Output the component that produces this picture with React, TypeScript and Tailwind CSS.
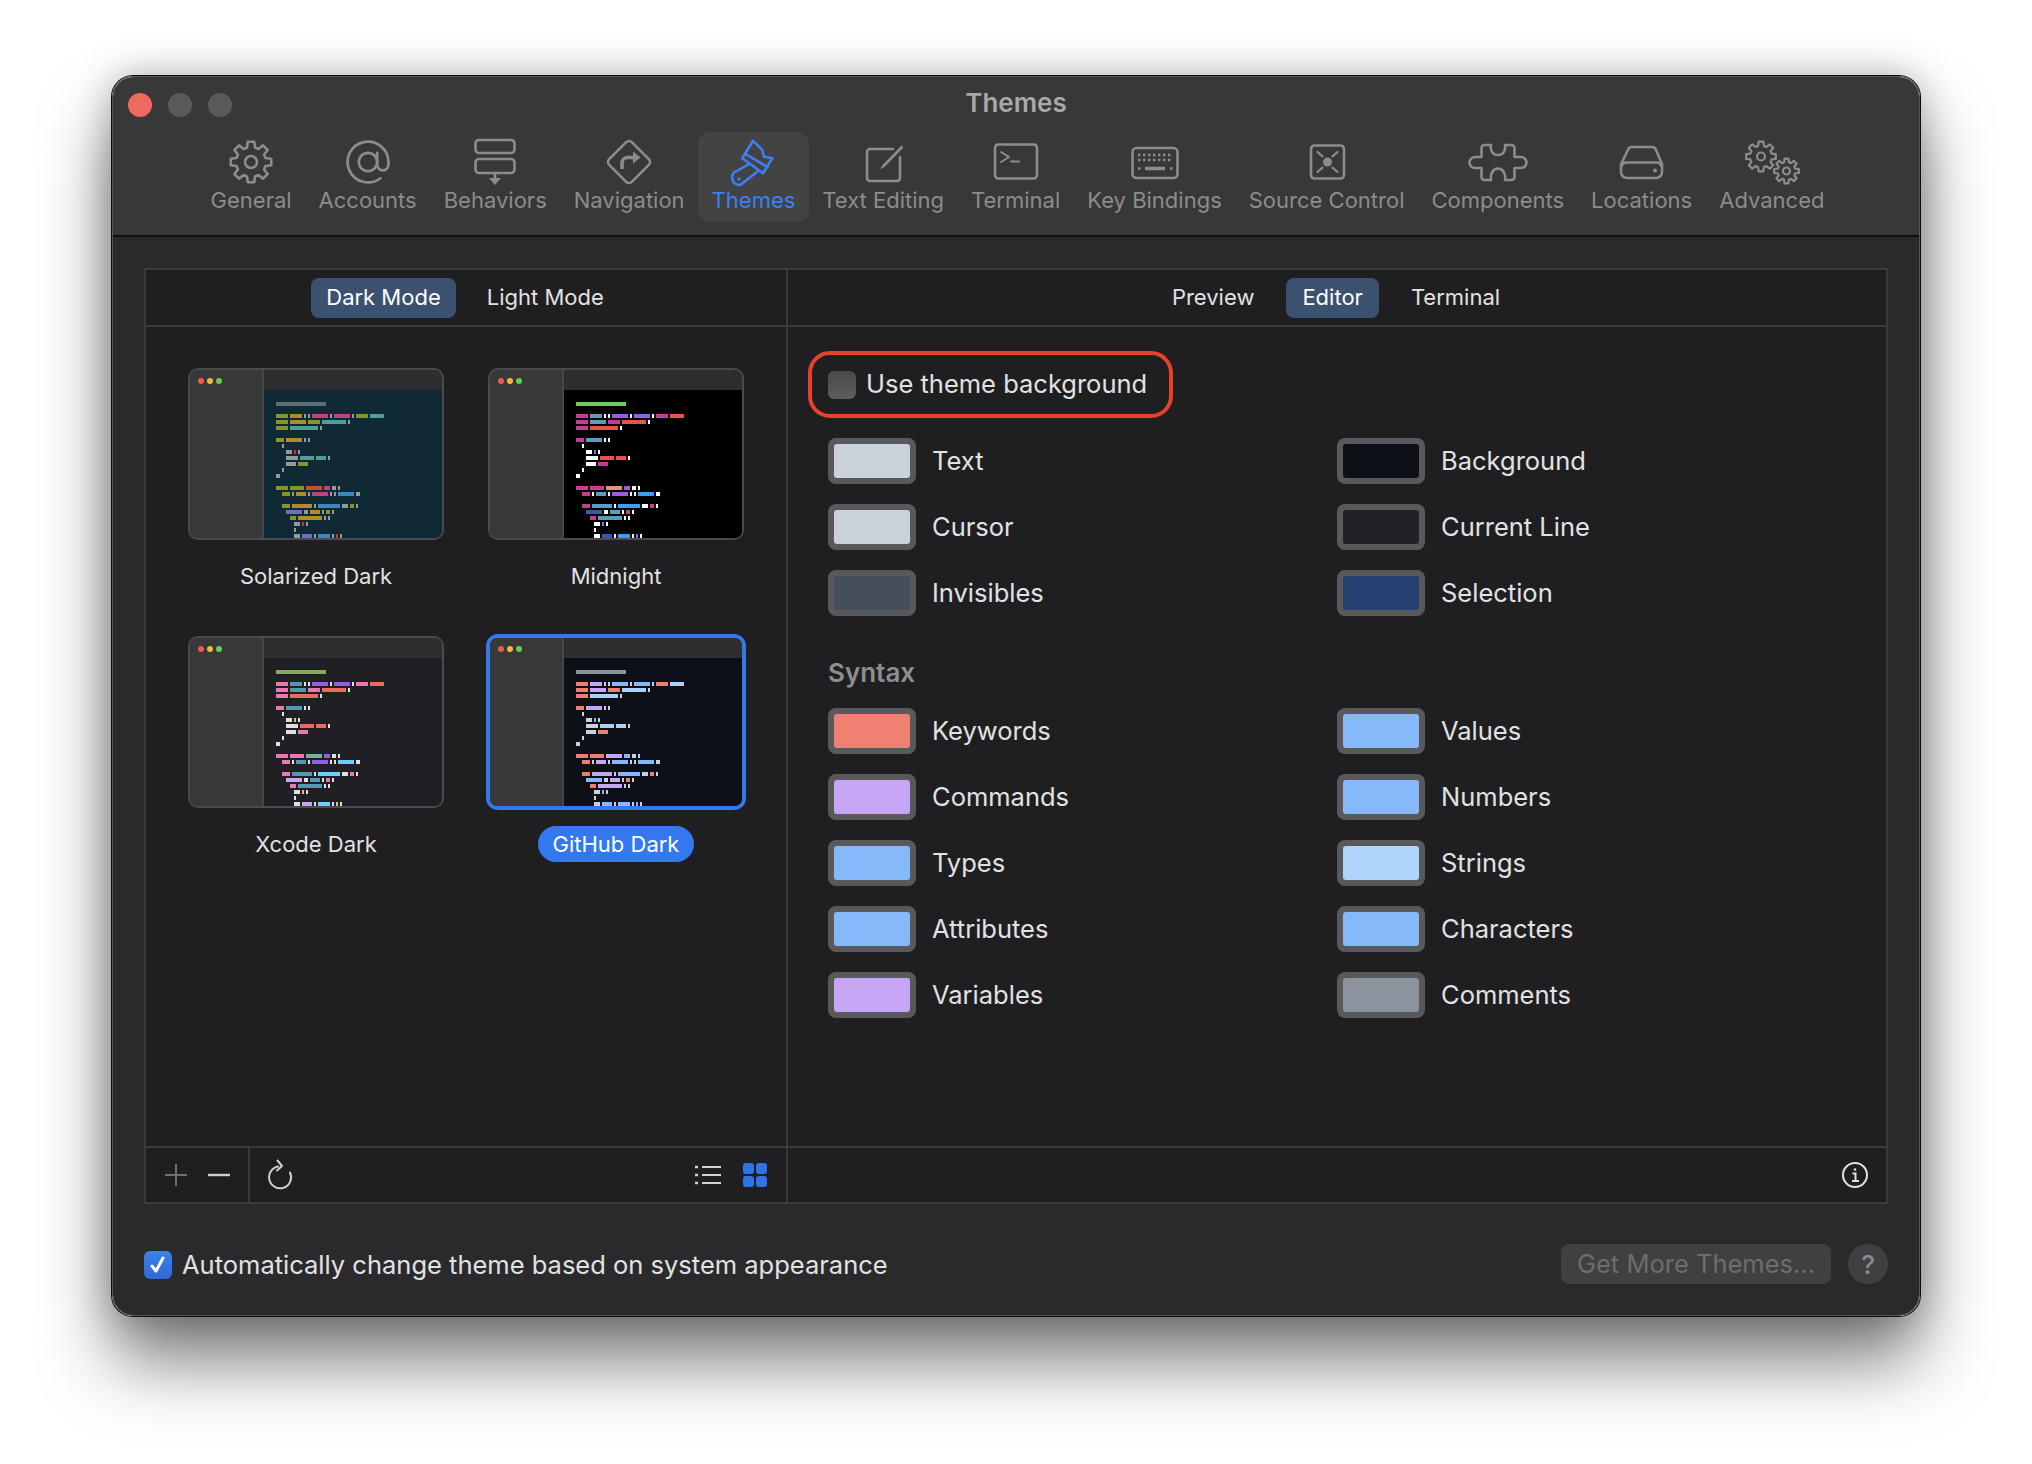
import React from "react";

type Seg = [number, string];
const rows: { i: number; s: Seg[] }[] = [
  { i: 0, s: [[50, "K"]] },
  { i: 0, s: [] },
  { i: 0, s: [[12, "A"], [12, "B"], [2, "P"], [2, "P"], [16, "C"], [2, "P"], [16, "C"], [2, "P"], [12, "A"], [14, "D"]] },
  { i: 0, s: [[12, "A"], [16, "B"], [12, "A"], [24, "D"], [2, "P"]] },
  { i: 0, s: [[12, "A"], [28, "D"], [2, "P"]] },
  { i: 0, s: [] },
  { i: 0, s: [[8, "A"], [16, "B"], [2, "P"], [2, "P"]] },
  { i: 6, s: [[2, "P"]] },
  { i: 10, s: [[6, "P"], [2, "E"], [2, "P"]] },
  { i: 10, s: [[12, "P"], [14, "D"], [10, "D"], [2, "P"]] },
  { i: 10, s: [[10, "P"], [10, "A"]] },
  { i: 6, s: [[2, "P"]] },
  { i: 0, s: [[4, "P"]] },
  { i: 0, s: [] },
  { i: 0, s: [[12, "A"], [14, "A"], [16, "G"], [6, "C"], [4, "P"], [2, "P"]] },
  { i: 6, s: [[8, "A"], [2, "P"], [10, "B"], [2, "P"], [16, "C"], [2, "P"], [2, "P"], [16, "H"], [4, "P"]] },
  { i: 0, s: [] },
  { i: 6, s: [[8, "A"], [20, "B"], [2, "P"], [22, "H"], [6, "P"], [4, "A"], [2, "P"]] },
  { i: 10, s: [[16, "I"], [4, "P"], [10, "B"], [2, "P"], [4, "A"], [2, "P"]] },
  { i: 14, s: [[6, "A"], [24, "B"], [2, "P"], [2, "P"]] },
  { i: 18, s: [[6, "P"], [2, "E"], [2, "P"]] },
  { i: 18, s: [[2, "P"]] },
  { i: 18, s: [[6, "P"], [10, "I"], [2, "P"], [12, "H"], [2, "P"], [2, "E"], [2, "P"]] },
];

const themes: { name: string; bg: string; selected?: boolean; p: Record<string, string> }[] = [
  {
    name: "Solarized Dark",
    bg: "bg-[#102a35]",
    p: { A: "#87942a", B: "#b18a2c", P: "#8f9b9c", C: "#c2407f", D: "#4f9e97", E: "#d6352f", G: "#bd5528", H: "#3f86c6", I: "#6d70be", K: "#5b6f74" },
  },
  {
    name: "Midnight",
    bg: "bg-[#000000]",
    p: { A: "#c53d92", B: "#5a9cb9", P: "#ffffff", C: "#9460de", D: "#e8534b", E: "#7470e6", G: "#de996c", H: "#3f9bf0", I: "#3f57a6", K: "#6fca64" },
  },
  {
    name: "Xcode Dark",
    bg: "bg-[#1f1f24]",
    p: { A: "#ec78ae", B: "#5497b5", P: "#dfdfe0", C: "#9360dd", D: "#e96d5e", E: "#d6c56c", G: "#78b09f", H: "#6dcffa", I: "#c9a3f5", K: "#84a95c" },
  },
  {
    name: "GitHub Dark",
    bg: "bg-[#0d1117]",
    selected: true,
    p: { A: "#ef7d73", B: "#c8a6f6", P: "#c9d1d9", C: "#85b9f9", D: "#a8d2fc", E: "#79b8ff", G: "#c8a6f6", H: "#85b9f9", I: "#85b9f9", K: "#8b949e" },
  },
];

function gear(cx: number, cy: number, R: number, r: number, n: number) {
  const pts: string[] = [];
  for (let k = 0; k < n; k++) {
    const a = (k * 2 * Math.PI) / n - Math.PI / 2;
    const t1 = 0.27 * (8 / n);
    const t2 = 0.16 * (8 / n);
    for (const [rad, d] of [[r, -t1], [R, -t2], [R, t2], [r, t1]] as [number, number][]) {
      pts.push(`${(cx + rad * Math.cos(a + d)).toFixed(2)} ${(cy + rad * Math.sin(a + d)).toFixed(2)}`);
    }
  }
  return "M" + pts.join("L") + "Z";
}

const strokeProps = { fill: "none", stroke: "currentColor", strokeLinecap: "round" as const, strokeLinejoin: "round" as const };

const I = ({ w = 48, children }: { w?: number; children: React.ReactNode }) => (
  <svg width={w} height={48} viewBox={`0 0 ${w} 48`} {...strokeProps} strokeWidth={2.6} className="shrink-0">
    {children}
  </svg>
);

const tabs: { label: string; icon: React.ReactNode; active?: boolean }[] = [
  {
    label: "General",
    icon: (
      <I>
        <path d={gear(24, 24, 20.5, 15, 8)} />
        <circle cx={24} cy={24} r={6} />
      </I>
    ),
  },
  {
    label: "Accounts",
    icon: (
      <svg width={48} height={48} viewBox="0 0 24 24" {...strokeProps} strokeWidth={1.35} className="shrink-0">
        <circle cx={12} cy={12} r={4.6} />
        <path d="M16.6 7.4v6a2.8 2.8 0 0 0 5.6 0V12a10.2 10.2 0 1 0-4 8.1" />
      </svg>
    ),
  },
  {
    label: "Behaviors",
    icon: (
      <I>
        <rect x={4.5} y={2} width={39} height={13} rx={3.5} />
        <rect x={4.5} y={21} width={39} height={14} rx={3.5} />
        <path d="M24 35v6" />
        <path d="M18 40h12l-6 7z" fill="currentColor" stroke="none" />
      </I>
    ),
  },
  {
    label: "Navigation",
    icon: (
      <I>
        <rect x={8} y={8} width={32} height={32} rx={4} transform="rotate(45 24 24)" />
        <path d="M17 31v-6a5.5 5.5 0 0 1 5.5-5.5h7" strokeWidth={3.6} strokeLinecap="butt" />
        <path d="M28 13.5l7.5 6-7.5 6z" fill="currentColor" stroke="none" />
      </I>
    ),
  },
  {
    label: "Themes",
    active: true,
    icon: (
      <I>
        <path d="M24 2.700 33.300 12 35 18.700 43.300 20.300 34 35.300 13.300 20.300z" />
        <path d="M16.500 16 38.500 29" />
        <path d="M20 26 8 33a6 6 0 0 0-4.500 8 6.500 6.500 0 0 0 8.500 5.500L29 33" />
        <circle cx={10} cy={41} r={1.7} fill="currentColor" stroke="none" />
      </I>
    ),
  },
  {
    label: "Text Editing",
    icon: (
      <I>
        <path d="M34 11H11a3 3 0 0 0-3 3v26a3 3 0 0 0 3 3h27a3 3 0 0 0 3-3V19" />
        <path d="M42.500 7.500 24 26.500l-3 5 5-3L44.500 9.500z" fill="currentColor" stroke="none" />
      </I>
    ),
  },
  {
    label: "Terminal",
    icon: (
      <I>
        <rect x={3} y={6.500} width={42} height={34} rx={3.5} />
        <path d="M9 14l8 5-8 5" strokeWidth={2} />
        <path d="M19 23.500h8" strokeWidth={2} />
      </I>
    ),
  },
  {
    label: "Key Bindings",
    icon: (
      <I w={60}>
        <rect x={7.500} y={10} width={45} height={30} rx={4} />
        {[17, 22].map((y) => (
          <path key={y} d={`M13 ${y}h35`} strokeWidth={2.6} strokeDasharray="2.4 2.6" strokeLinecap="butt" />
        ))}
        <path d="M20 30.500h20" strokeWidth={3.6} strokeLinecap="butt" />
        <path d="M13 30.500h2.500M45 30.500h2.500" strokeLinecap="butt" />
      </I>
    ),
  },
  {
    label: "Source Control",
    icon: (
      <I>
        <rect x={8} y={7.500} width={33} height={33} rx={3.5} />
        <circle cx={24.5} cy={24} r={4.5} fill="currentColor" stroke="none" />
        <path d="M14.500 14l5 4.300M34.500 14l-5 4.300M14.500 34l5-4.300M34.500 34l-5-4.300" strokeWidth={2.2} />
      </I>
    ),
  },
  {
    label: "Components",
    icon: (
      <I w={60}>
        <path d="M13.500 19v-9a3 3 0 0 1 3-3H23c-1 6 2 10 7 10s8-4 7-10h6.500a3 3 0 0 1 3 3v9H53a5.500 5.500 0 0 1 0 11h-6.500v9a3 3 0 0 1-3 3H37c1-6-2-11.500-7-11.500S22 36 23 42h-6.500a3 3 0 0 1-3-3v-9H7a5.500 5.500 0 0 1 0-11z" />
      </I>
    ),
  },
  {
    label: "Locations",
    icon: (
      <I>
        <path d="M14 9h20a4 4 0 0 1 4 3l6 14v8a6 6 0 0 1-6 6H9a6 6 0 0 1-6-6v-8l7-14a4 4 0 0 1 4-3z" />
        <path d="M3.500 28a5 5 0 0 1 5-3.500h30a5 5 0 0 1 5 3.500" />
        <circle cx={37} cy={32.500} r={2} fill="currentColor" stroke="none" />
      </I>
    ),
  },
  {
    label: "Advanced",
    icon: (
      <I w={60}>
        <path d={gear(19, 18.500, 15, 11, 8)} strokeWidth={2.2} />
        <circle cx={19} cy={18.500} r={4} strokeWidth={2.2} />
        <path d={gear(44.500, 33, 12.500, 9, 8)} strokeWidth={2.2} />
        <circle cx={44.500} cy={33} r={3.500} strokeWidth={2.2} />
      </I>
    ),
  },
];

const ThemeCard = ({ t }: { t: (typeof themes)[number] }) => (
  <div className="flex w-[260px] flex-col items-center">
    <div
      className={
        t.selected
          ? "h-[176px] w-[260px] rounded-[12px] border-[4px] border-[#3478f0]"
          : "m-[2px] h-[172px] w-[256px] rounded-[10px] border-[2px] border-[#4b4b4d]"
      }
    >
      <div className="flex h-[168px] w-[252px] overflow-hidden rounded-[7px]">
        <div className="flex w-[74px] shrink-0 gap-[3px] border-r-[2px] border-[#474747] bg-[#383838] pl-[8px] pt-[8px]">
          <span className="h-[6px] w-[6px] rounded-full bg-[#ec5a4e]" />
          <span className="h-[6px] w-[6px] rounded-full bg-[#efb93f]" />
          <span className="h-[6px] w-[6px] rounded-full bg-[#5fcf55]" />
        </div>
        <div className="flex min-w-0 flex-1 flex-col">
          <div className="h-[20px] shrink-0 bg-[#2e2e2e]" />
          <div className={`flex flex-1 flex-col gap-[2px] overflow-hidden pl-[12px] pt-[12px] ${t.bg}`}>
            {rows.map((r, k) => (
              <div key={k} className="flex h-[4px] shrink-0 gap-[2px]" style={{ paddingLeft: r.i }}>
                {r.s.map(([w, c], j) => (
                  <span key={j} className="h-[4px] shrink-0" style={{ width: w, background: t.p[c] }} />
                ))}
              </div>
            ))}
          </div>
        </div>
      </div>
    </div>
    <div
      className={
        t.selected
          ? "mt-[16px] flex h-[36px] items-center rounded-full bg-[#3478f0] px-[15px] text-[22px] text-white"
          : "mt-[16px] flex h-[36px] items-center text-[22px] text-[#e2e2e2]"
      }
    >
      {t.name}
    </div>
  </div>
);

const Swatch = ({ label, color }: { label: string; color: string }) => (
  <div className="flex h-[46px] items-center gap-[16px]">
    <div className="flex h-[46px] w-[88px] items-center justify-center rounded-[8px] bg-[#59595b]">
      <div className="h-[34px] w-[76px] rounded-[3px]" style={{ background: color }} />
    </div>
    <span className="text-[25.500px] text-[#e2e2e2]">{label}</span>
  </div>
);

const Group = ({ items }: { items: [string, string, string, string][] }) => (
  <div className="ml-[40px] grid grid-cols-[509px_1fr] gap-y-[20px]">
    {items.map((it) => (
      <React.Fragment key={it[0]}>
        <Swatch label={it[0]} color={it[1]} />
        <Swatch label={it[2]} color={it[3]} />
      </React.Fragment>
    ))}
  </div>
);

export default function App() {
  return (
    <div className="min-h-[1464px] w-[2032px] bg-white pl-[112px] pt-[76px] [font-family:Inter,'Noto_Sans',sans-serif]">
      <div className="flex h-[1240px] w-[1808px] flex-col overflow-hidden rounded-[21px] border border-[#555557] shadow-[0_0_0_1px_#0c0c0c,0_46px_70px_rgba(0,0,0,0.5),0_0_40px_rgba(0,0,0,0.28)]">
        <div className="h-[160px] shrink-0 border-b-[2px] border-[#101010] bg-[#383838]">
          <div className="grid h-[55px] grid-cols-[1fr_auto_1fr] items-center px-[15px]">
            <div className="flex gap-[16px]">
              <span className="h-[24px] w-[24px] rounded-full bg-[#ee6a5f]" />
              <span className="h-[24px] w-[24px] rounded-full bg-[#5a5a5a]" />
              <span className="h-[24px] w-[24px] rounded-full bg-[#5a5a5a]" />
            </div>
            <div className="pb-[5px] text-[26px] font-semibold text-[#a9a9a9]">Themes</div>
            <div />
          </div>
          <div className="flex justify-center pl-[3px]">
            {tabs.map((t) => (
              <div
                key={t.label}
                className={`flex h-[90px] flex-col items-center rounded-[12px] px-[13.500px] pt-[6px] ${
                  t.active ? "bg-[#434343] text-[#3b80f5]" : "text-[#8c8c8c]"
                }`}
              >
                <div className="flex h-[47px] w-full items-start justify-center">{t.icon}</div>
                <span className="whitespace-nowrap text-[22px] leading-[30px]">{t.label}</span>
              </div>
            ))}
          </div>
        </div>

        <div className="flex min-h-0 flex-1 flex-col bg-[#2a2a2c] px-[31px] pt-[31px]">
          <div className="grid h-[936px] shrink-0 grid-cols-[642px_1fr] grid-rows-[57px_1fr_56px] border-[2px] border-[#3b3b3d] bg-[#1f1f21]">
            <div className="flex items-center justify-center gap-[16px] border-b-[2px] border-r-[2px] border-[#3b3b3d] pr-[2px]">
              <span className="flex h-[40px] items-center rounded-[8px] bg-[#3c5070] px-[15px] text-[22px] text-white">Dark Mode</span>
              <span className="flex h-[40px] items-center px-[15px] text-[22px] text-[#e2e2e2]">Light Mode</span>
            </div>
            <div className="flex items-center justify-center gap-[16px] border-b-[2px] border-[#3b3b3d] pr-[2px]">
              <span className="flex h-[40px] items-center px-[16px] text-[22px] text-[#e2e2e2]">Preview</span>
              <span className="flex h-[40px] items-center rounded-[8px] bg-[#3c5070] px-[16px] text-[22px] text-white">Editor</span>
              <span className="flex h-[40px] items-center px-[16px] text-[22px] text-[#e2e2e2]">Terminal</span>
            </div>

            <div className="border-r-[2px] border-[#3b3b3d] pl-[40px] pt-[39px]">
              <div className="grid grid-cols-[260px_260px] gap-x-[40px] gap-y-[40px]">
                {themes.map((t) => (
                  <ThemeCard key={t.name} t={t} />
                ))}
              </div>
            </div>

            <div className="pt-[24px]">
              <div className="ml-[20px] flex h-[67px] w-[365px] items-center gap-[10px] rounded-[22px] border-[4px] border-[#e8412a] pl-[16px]">
                <span className="h-[28px] w-[28px] rounded-[6px] bg-gradient-to-b from-[#4a4a4c] to-[#5c5c5e]" />
                <span className="whitespace-nowrap text-[25.500px] text-[#e2e2e2]">Use theme background</span>
              </div>
              <div className="mt-[20px]">
                <Group
                  items={[
                    ["Text", "#c9d1d9", "Background", "#0d1117"],
                    ["Cursor", "#c9d1d9", "Current Line", "#202226"],
                    ["Invisibles", "#454f5b", "Selection", "#244070"],
                  ]}
                />
              </div>
              <div className="mb-[21px] ml-[40px] mt-[43px] text-[26px] font-semibold leading-[28px] text-[#8e8e8e]">Syntax</div>
              <Group
                items={[
                  ["Keywords", "#ef8072", "Values", "#85b9f9"],
                  ["Commands", "#c8a6f6", "Numbers", "#85b9f9"],
                  ["Types", "#85b9f9", "Strings", "#b0d5fd"],
                  ["Attributes", "#85b9f9", "Characters", "#85b9f9"],
                  ["Variables", "#c8a6f6", "Comments", "#8b949e"],
                ]}
              />
            </div>

            <div className="flex items-center border-r-[2px] border-t-[2px] border-[#3b3b3d]">
              <div className="flex h-full w-[104px] items-center gap-[21px] border-r-[2px] border-[#3b3b3d] pl-[19px]">
                <svg width={22} height={22} viewBox="0 0 22 22" className="text-[#707070]">
                  <path d="M11 0v22M0 11h22" stroke="currentColor" strokeWidth={2} />
                </svg>
                <svg width={22} height={22} viewBox="0 0 22 22" className="text-[#d0d0d0]">
                  <path d="M0 11h22" stroke="currentColor" strokeWidth={2.4} />
                </svg>
              </div>
              <svg width={28} height={32} viewBox="0 0 28 32" className="ml-[16px] text-[#d0d0d0]" {...strokeProps} strokeWidth={2}>
                <path d="M12 7.500a11 11 0 1 0 12 6" />
                <path d="M11.500 1.500 16 7l-5 4.500" />
              </svg>
              <div className="ml-auto flex items-center gap-[22px] pr-[19px]">
                <svg width={26} height={24} viewBox="0 0 26 24" className="text-[#d0d0d0]">
                  <path d="M7 4h19M7 12h19M7 20h19" stroke="currentColor" strokeWidth={2} />
                  <path d="M0 4h3M0 12h3M0 20h3" stroke="currentColor" strokeWidth={2.6} />
                </svg>
                <div className="grid h-[24px] w-[24px] grid-cols-2 gap-[2px]">
                  <span className="rounded-[3px] bg-[#2f72ea]" />
                  <span className="rounded-[3px] bg-[#2f72ea]" />
                  <span className="rounded-[3px] bg-[#2f72ea]" />
                  <span className="rounded-[3px] bg-[#2f72ea]" />
                </div>
              </div>
            </div>
            <div className="flex items-center justify-end border-t-[2px] border-[#3b3b3d] pr-[18px]">
              <svg width={26} height={26} viewBox="0 0 26 26" className="text-[#e2e2e2]" {...strokeProps} strokeWidth={2}>
                <circle cx={13} cy={13} r={12} />
                <circle cx={13} cy={7.500} r={1.3} fill="currentColor" stroke="none" />
                <path d="M10.500 11.500H13.500V19M10 19h7" strokeLinecap="butt" strokeLinejoin="miter" />
              </svg>
            </div>
          </div>

          <div className="flex flex-1 items-center justify-between pt-[11px]">
            <div className="flex items-center gap-[10px]">
              <span className="flex h-[28px] w-[28px] items-center justify-center rounded-[6px] bg-gradient-to-b from-[#3e82ee] to-[#2d68d4]">
                <svg width={20} height={20} viewBox="0 0 20 20" fill="none" stroke="white" strokeWidth={3} strokeLinecap="round" strokeLinejoin="round">
                  <path d="M4 11l4 5 7-13" />
                </svg>
              </span>
              <span className="whitespace-nowrap text-[25.500px] text-[#e2e2e2]">Automatically change theme based on system appearance</span>
            </div>
            <div className="mb-[2px] flex items-center gap-[17px]">
              <span className="flex h-[40px] w-[270px] items-center justify-center rounded-[8px] bg-[#404042] text-[25.500px] text-[#6d6d6f]">Get More Themes...</span>
              <span className="flex h-[40px] w-[40px] items-center justify-center rounded-full bg-[#404042] text-[26px] font-medium text-[#8a8a8a]">?</span>
            </div>
          </div>
        </div>
      </div>
    </div>
  );
}
